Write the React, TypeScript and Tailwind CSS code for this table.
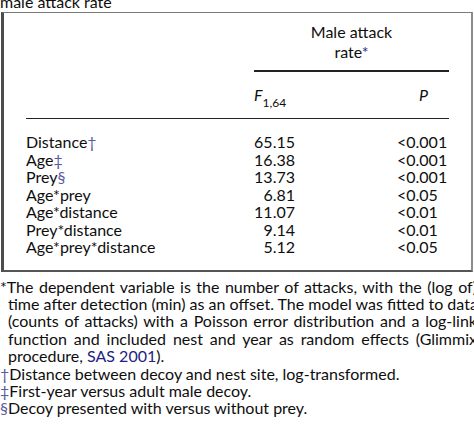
const ROWS = [
  { label: 'Distance', mark: '†', f: '65.15', p: '<0.001' },
  { label: 'Age', mark: '‡', f: '16.38', p: '<0.001' },
  { label: 'Prey', mark: '§', f: '13.73', p: '<0.001' },
  { label: 'Age*prey', mark: '', f: '6.81', p: '<0.05' },
  { label: 'Age*distance', mark: '', f: '11.07', p: '<0.01' },
  { label: 'Prey*distance', mark: '', f: '9.14', p: '<0.01' },
  { label: 'Age*prey*distance', mark: '', f: '5.12', p: '<0.05' },
];

const JUSTIFIED = 'text-justify [text-align-last:justify]';

export default function App() {
  return (
    <div
      className="w-[474px] h-[424px] overflow-hidden bg-white text-[#0e0e0e]"
      style={{ fontFamily: 'Lato, "Open Sans", sans-serif' }}
    >
      <div className="-mt-[7px] text-[16px] leading-[17px] whitespace-nowrap">male attack rate</div>

      <div className="mt-[2px] ml-[1px] w-[472px] border-l-[3px] border-l-[#4d4d4d] border-t-[1.5px] border-t-[#7a7a7a] border-r-[2px] border-r-[#8c8c8c] border-b-[2px] border-b-[#555] pl-[22px] pt-[9px] pb-[14px] text-[16px]">
        <div className="grid grid-cols-[228px_195px]">
          <div />
          <div className="text-center leading-[20px]">
            Male attack
            <br />
            rate<span className="text-[#2a2a8a]">*</span>
          </div>
        </div>

        <div className="grid grid-cols-[228px_195px] mt-[8px]">
          <div />
          <div className="h-[1.5px] bg-[#222]" />
        </div>

        <div className="grid grid-cols-[228px_143px_52px] mt-[13px] leading-[19px]">
          <div />
          <div className="italic">
            F<sub className="not-italic text-[12px] align-[-3px]">1,64</sub>
          </div>
          <div className="italic text-right pr-[21px]">P</div>
        </div>

        <div className="mt-[14px] w-[423px] h-[1.5px] bg-[#222]" />

        <div className="mt-[14px] flex flex-col leading-[17.5px]">
          {ROWS.map((row) => (
            <div key={row.label} className="grid grid-cols-[228px_143px_52px]">
              <div className="whitespace-nowrap">
                {row.label}
                {row.mark && <span className="text-[#5a5aa0]">{row.mark}</span>}
              </div>
              <div className="text-right pr-[102px]">{row.f}</div>
              <div className="whitespace-nowrap">{row.p}</div>
            </div>
          ))}
        </div>
      </div>

      {/* footnotes: justified block runs a little past the right edge, as in the source */}
      <div className="mt-[6px] w-[477px] text-[16px] leading-[17.4px] whitespace-nowrap">
        <div className="pl-[8px]">
          <div className={`-indent-[8px] ${JUSTIFIED}`}>
            *The dependent variable is the number of attacks, with the (log of)
          </div>
          <div className={JUSTIFIED}>time after detection (min) as an offset. The model was fitted to data</div>
          <div className={JUSTIFIED}>(counts of attacks) with a Poisson error distribution and a log-link</div>
          <div className={JUSTIFIED}>function and included nest and year as random effects (Glimmix</div>
          <div>
            procedure, <span className="text-[#23237f]">SAS 2001</span>).
          </div>
        </div>
        <div>
          <span className="text-[#5a5aa0]">†</span>Distance between decoy and nest site, log-transformed.
        </div>
        <div>
          <span className="text-[#5a5aa0]">‡</span>First-year versus adult male decoy.
        </div>
        <div>
          <span className="text-[#5a5aa0]">§</span>Decoy presented with versus without prey.
        </div>
      </div>
    </div>
  );
}
